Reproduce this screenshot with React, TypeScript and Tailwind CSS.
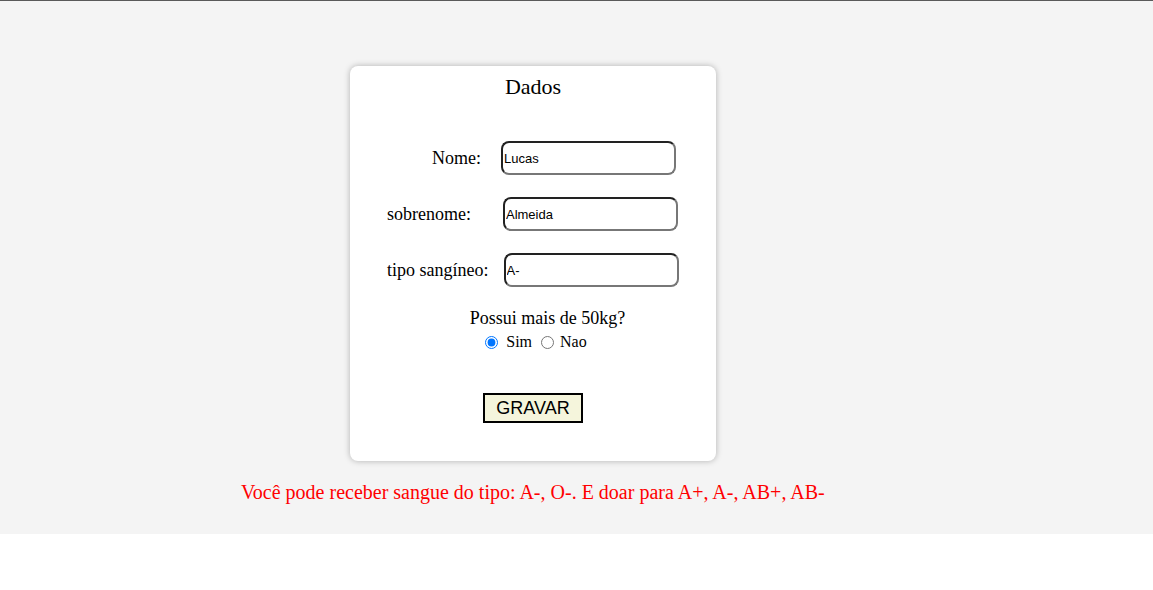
import { useState } from "react";

const serif = "font-['Liberation_Serif','Times_New_Roman',serif]";
const sans = "font-['Liberation_Sans',Arial,sans-serif]";

function Field({
  label,
  value,
  labelMl,
  inputMl,
}: {
  label: string;
  value: string;
  labelMl: string;
  inputMl: string;
}) {
  return (
    <div className="flex items-center h-[34px]">
      <label className={`${labelMl} text-[18px] leading-[22px] text-black whitespace-nowrap`}>
        {label}
      </label>
      <input
        className={`${inputMl} ${sans} h-[34px] w-[175px] rounded-[8px] border-2 border-t-[#222] border-l-[#222] border-r-[#777] border-b-[#777] bg-white px-[1px] text-[13px] text-black outline-none`}
        defaultValue={value}
      />
    </div>
  );
}

export default function App() {
  const [peso, setPeso] = useState("sim");

  return (
    <div className={`${serif} min-h-[590px] bg-white`}>
      <div className="h-[534px] border-t border-[#5a5a5a] bg-[#f4f4f4] pt-[65px]">
        <div className="ml-[350px] w-[366px] rounded-[8px] bg-white pt-[8px] pb-[38px] shadow-[0_0_6px_rgba(0,0,0,0.28)]">
          <h1 className="text-center text-[22px] leading-[26px] text-black">Dados</h1>

          <div className="mt-[41px] flex flex-col gap-[22px]">
            <Field label="Nome:" value="Lucas" labelMl="ml-[82px]" inputMl="ml-[20px]" />
            <Field label="sobrenome:" value="Almeida" labelMl="ml-[37px]" inputMl="ml-[32px]" />
            <Field label="tipo sangíneo:" value="A-" labelMl="ml-[37px]" inputMl="ml-[15px]" />
          </div>

          <p className="mt-[21px] pl-[29px] text-center text-[18px] leading-[20px] text-black">
            Possui mais de 50kg?
          </p>
          <div className="mt-[5px] flex items-center justify-center pl-[6px] text-[16px] leading-[18px] text-black">
            <input
              type="radio"
              name="peso"
              checked={peso === "sim"}
              onChange={() => setPeso("sim")}
              className="m-0 h-[13px] w-[13px]"
            />
            <span className="ml-[8px]">Sim</span>
            <input
              type="radio"
              name="peso"
              checked={peso === "nao"}
              onChange={() => setPeso("nao")}
              className="ml-[9px] h-[13px] w-[13px]"
            />
            <span className="ml-[6px]">Nao</span>
          </div>

          <div className="mt-[42px] flex justify-center">
            <button
              className={`${sans} h-[30px] w-[100px] border-2 border-black bg-[#f5f5dc] text-[18px] leading-[20px] text-black`}
            >
              GRAVAR
            </button>
          </div>
        </div>

        <p className="ml-[241px] mt-[19px] text-[20px] leading-[24px] text-[#ff0000]">
          Você pode receber sangue do tipo: A-, O-. E doar para A+, A-, AB+, AB-
        </p>
      </div>
    </div>
  );
}
